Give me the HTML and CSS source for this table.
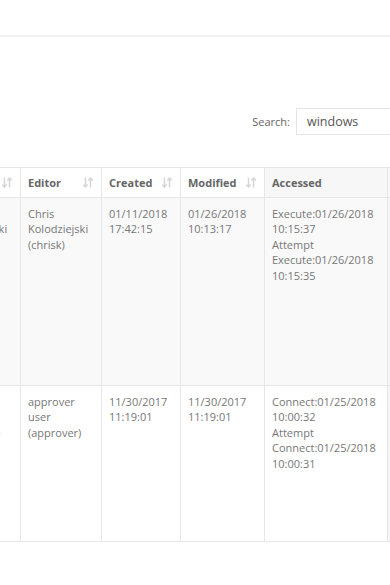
FILE: index.html
```html
<!DOCTYPE html>
<html>
<head>
<meta charset="utf-8">
<link rel="stylesheet" href="styles.css">
</head>
<body>
<div class="topbar"></div>
<div class="filter">
  <label class="filter-label">Search:</label>
  <input class="filter-input" type="text" value="windows">
</div>
<div class="table-wrap">
  <table class="grid">
    <colgroup>
      <col class="c-owner"><col class="c-editor"><col class="c-created"><col class="c-modified"><col class="c-accessed"><col class="c-extra">
    </colgroup>
    <thead>
      <tr>
        <th class="sortable">Owner<svg class="sort" viewBox="0 0 10 11"><path d="M2.5 0.5V10M0.3 7.6L2.5 10L4.7 7.6M7.5 10.5V1M5.3 3.4L7.5 1L9.7 3.4"/></svg></th>
        <th class="sortable">Editor<svg class="sort" viewBox="0 0 10 11"><path d="M2.5 0.5V10M0.3 7.6L2.5 10L4.7 7.6M7.5 10.5V1M5.3 3.4L7.5 1L9.7 3.4"/></svg></th>
        <th class="sortable">Created<svg class="sort" viewBox="0 0 10 11"><path d="M2.5 0.5V10M0.3 7.6L2.5 10L4.7 7.6M7.5 10.5V1M5.3 3.4L7.5 1L9.7 3.4"/></svg></th>
        <th class="sortable">Modified<svg class="sort" viewBox="0 0 10 11"><path d="M2.5 0.5V10M0.3 7.6L2.5 10L4.7 7.6M7.5 10.5V1M5.3 3.4L7.5 1L9.7 3.4"/></svg></th>
        <th class="plain">Accessed</th>
        <th class="plain"></th>
      </tr>
    </thead>
    <tbody>
      <tr class="row-odd row-a">
        <td>Chris Kolodziejski (chrisk)</td>
        <td>Chris Kolodziejski (chrisk)</td>
        <td>01/11/2018 17:42:15</td>
        <td>01/26/2018 10:13:17</td>
        <td>Execute:01/26/2018 10:15:37<br>Attempt Execute:01/26/2018 10:15:35</td>
        <td></td>
      </tr>
      <tr class="row-even row-b">
        <td>approver user (approver)</td>
        <td>approver user (approver)</td>
        <td>11/30/2017 11:19:01</td>
        <td>11/30/2017 11:19:01</td>
        <td>Connect:01/25/2018 10:00:32<br>Attempt Connect:01/25/2018 10:00:31</td>
        <td></td>
      </tr>
    </tbody>
  </table>
</div>
</body>
</html>
```
FILE: styles.css
```css
html, body {
  margin: 0;
  padding: 0;
  background: #ffffff;
  font-family: "Open Sans", "Noto Sans", sans-serif;
  overflow: hidden;
}

.topbar {
  height: 35px;
  border-bottom: 2px solid #f1f1f1;
}

.filter {
  display: flex;
  align-items: center;
  justify-content: flex-end;
  gap: 6px;
  margin-top: 71px;
  margin-right: -110px;
}

.filter-label {
  font-size: 11px;
  color: #666;
}

.filter-input {
  box-sizing: border-box;
  width: 204px;
  height: 27px;
  border: 1px solid #e4e4e4;
  border-radius: 0;
  padding: 0 10px;
  font-family: "Open Sans", "Noto Sans", sans-serif;
  font-size: 12.5px;
  color: #555;
  outline: none;
}

.table-wrap {
  margin-top: 32px;
  overflow: hidden;
}

.grid {
  border-collapse: collapse;
  table-layout: fixed;
  width: 542px;
  margin-left: -61px;
  font-size: 11px;
  color: #777;
  line-height: 15.6px;
}

.c-owner { width: 81px; }
.c-editor { width: 81px; }
.c-created { width: 79px; }
.c-modified { width: 84px; }
.c-accessed { width: 123px; }
.c-extra { width: 94px; }

.grid th, .grid td {
  border: 1px solid #e6e6e6;
  text-align: left;
  vertical-align: top;
  padding: 8px 7px 8px 7px;
}

.grid th {
  font-weight: 700;
  color: #666;
  background: #fff;
  padding: 7px 7px 6px 7px;
  white-space: nowrap;
  position: relative;
}

.grid th.plain {
  background: #f7f7f7;
}

.sort {
  position: absolute;
  right: 8px;
  top: 9px;
  width: 10px;
  height: 11px;
  fill: none;
  stroke: #d6d6d6;
  stroke-width: 1.5;
}

.row-odd td {
  background: #f9f9f9;
}

.row-even td {
  background: #ffffff;
}

.row-a { height: 188px; }
.row-b { height: 156px; }

.grid td:last-child {
  background: #f6f6f6;
}
```
